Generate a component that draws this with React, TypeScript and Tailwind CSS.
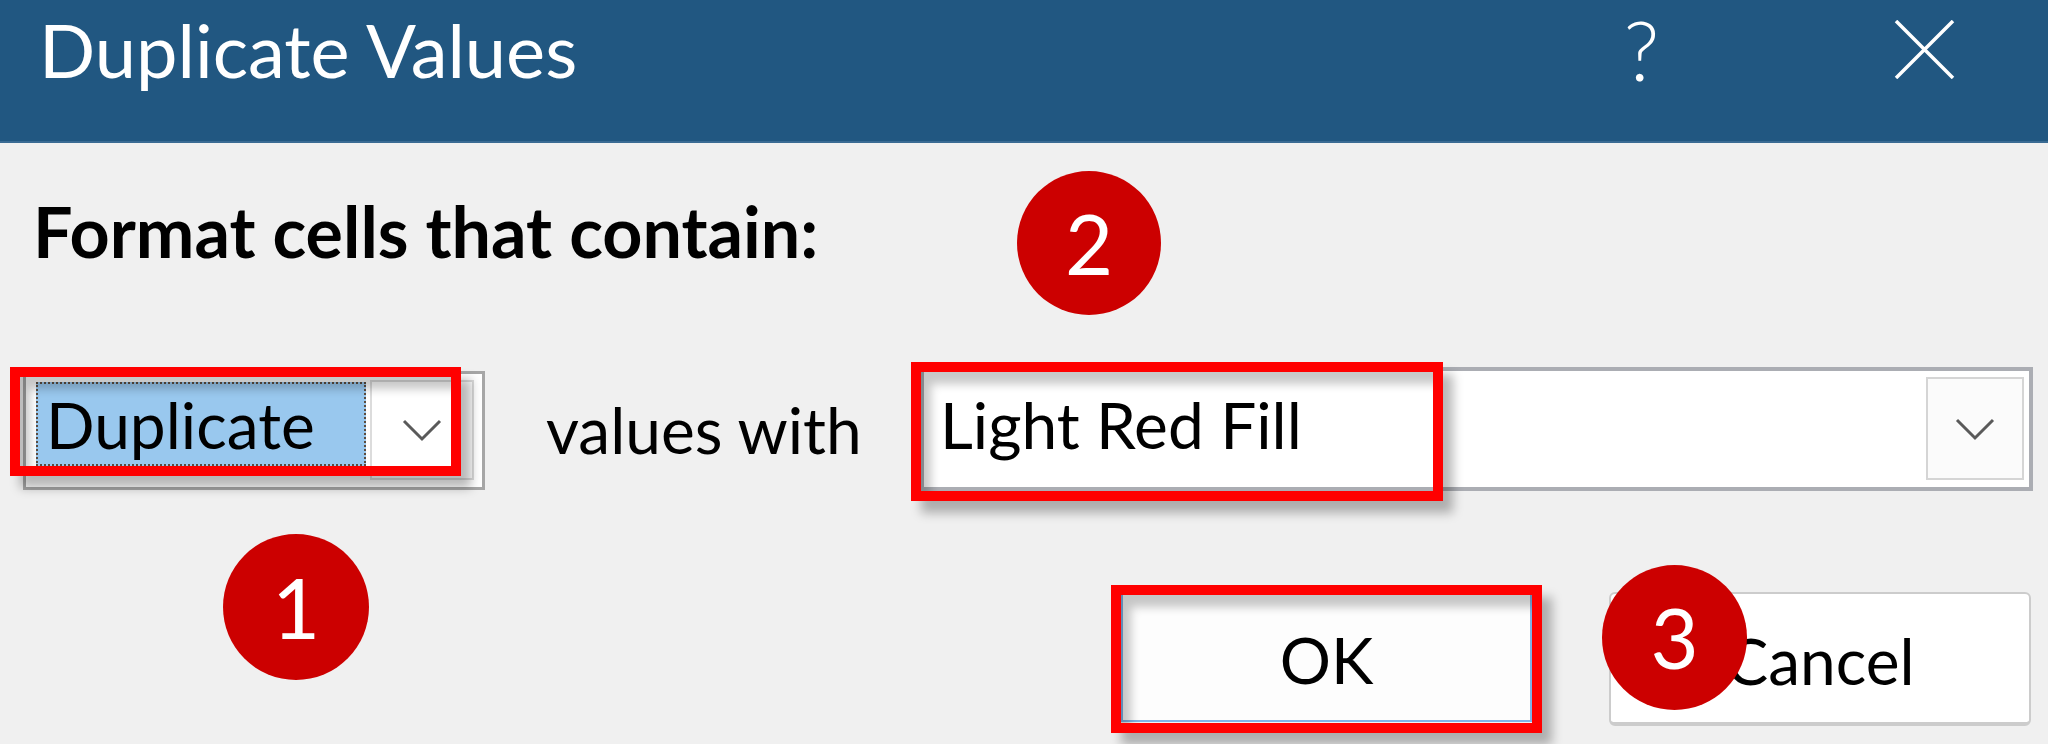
import React from 'react';

function Chevron() {
  return (
    <svg width="40" height="24" viewBox="0 0 40 24" fill="none">
      <path d="M2 3 L20 21 L38 3" stroke="#5a5a5a" strokeWidth="3" />
    </svg>
  );
}

function RedBox({ className }: { className: string }) {
  return (
    <div
      className={
        'absolute border-[10px] border-[#ff0000] shadow-[10px_12px_10px_rgba(0,0,0,0.28),inset_10px_12px_10px_rgba(0,0,0,0.22)] ' +
        className
      }
    />
  );
}

function Marker({ n, className }: { n: string; className: string }) {
  return (
    <div
      className={
        'absolute flex items-center justify-center rounded-full bg-[#cc0000] text-[83px] leading-none text-white ' +
        className
      }
    >
      {n}
    </div>
  );
}

export default function App() {
  return (
    <div className="relative h-[744px] w-[2048px] overflow-hidden bg-[#f0f0f0] font-[Lato,'Noto_Sans',sans-serif] text-black">
      {/* title bar */}
      <div className="flex h-[143px] items-start border-b-2 border-[#3a6b93] bg-[#215781] text-white">
        <div className="pl-[39px] pt-[13px] text-[74px] leading-none whitespace-nowrap">Duplicate Values</div>
        <div className="ml-auto w-[83px] pt-[-2px] text-center text-[82px] font-light leading-[1.2]">?</div>
        <svg className="ml-[211px] mr-[93px] mt-[20px]" width="61" height="59" viewBox="0 0 61 59">
          <path d="M2 1 L59 58 M59 1 L2 58" stroke="#ffffff" strokeWidth="3.5" />
        </svg>
      </div>

      <div className="pl-[33px] pt-[53px] text-[70px] font-bold leading-none whitespace-nowrap">
        Format cells that contain:
      </div>

      <div className="mt-[101px] flex items-start pl-[23px]">
        <div className="mt-[4px] flex h-[119px] w-[462px] items-start border-[3px] border-[#a6a6a6] bg-white pl-[10px] pt-[8px]">
          <div className="h-[84px] w-[330px] border-2 border-dotted border-[#5c4d40] bg-[#99c8ee] pl-[8px] pt-[9px] text-[64px] leading-none">
            Duplicate
          </div>
          <div className="-mt-[2px] ml-[4px] flex h-[100px] w-[104px] items-center justify-center border-2 border-[#dcdcdc] bg-white">
            <Chevron />
          </div>
        </div>
        <div className="ml-[61px] mt-[31px] w-[310px] text-[64px] leading-none whitespace-nowrap">values with</div>
        <div className="ml-[64px] flex h-[124px] w-[1113px] items-start border-4 border-[#abadb3] bg-white">
          <div className="pl-[16px] pt-[22px] text-[64px] leading-none whitespace-nowrap">Light Red Fill</div>
          <div className="ml-auto mr-[5px] mt-[6px] flex h-[103px] w-[98px] items-center justify-center border-2 border-[#d5d5d5] bg-[#fbfbfb]">
            <Chevron />
          </div>
        </div>
      </div>

      <div className="mt-[101px] flex justify-end gap-[77px] pr-[17px]">
        <div className="flex h-[130px] w-[411px] items-center justify-center border-2 border-[#7fb2e5] bg-[#fdfdfd] pt-[6px] text-[64px] leading-none">
          OK
        </div>
        <div className="flex h-[134px] w-[422px] items-center justify-center rounded-[6px] border-2 border-b-4 border-[#cccccc] bg-white pt-[6px] text-[64px] leading-none">
          Cancel
        </div>
      </div>

      {/* annotations */}
      <RedBox className="left-[10px] top-[367px] h-[109px] w-[451px]" />
      <RedBox className="left-[911px] top-[362px] h-[139px] w-[532px]" />
      <RedBox className="left-[1111px] top-[585px] h-[148px] w-[431px]" />
      <Marker n="1" className="left-[223px] top-[534px] h-[146px] w-[146px]" />
      <Marker n="2" className="left-[1017px] top-[171px] h-[144px] w-[144px]" />
      <Marker n="3" className="left-[1602px] top-[565px] h-[145px] w-[145px]" />
    </div>
  );
}
